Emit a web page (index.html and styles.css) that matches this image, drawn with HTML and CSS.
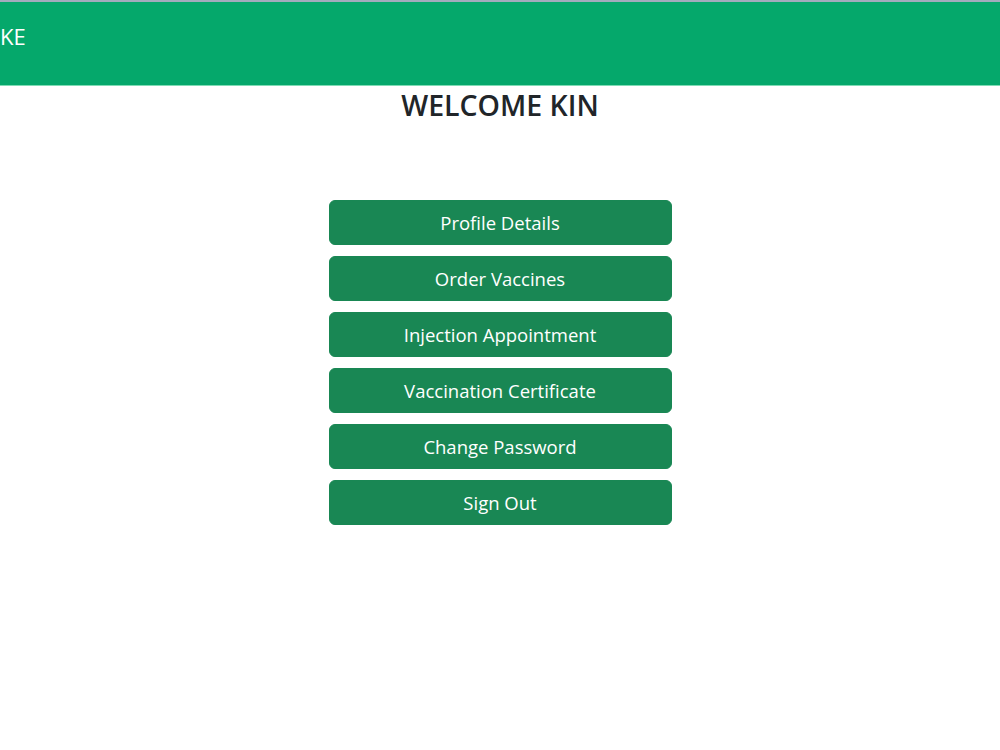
FILE: index.html
```html
<!DOCTYPE html>
<html lang="en">
<head>
  <meta charset="UTF-8" />
  <meta name="viewport" content="width=device-width, initial-scale=1.0" />
  <title>Welcome</title>
  <link rel="stylesheet" href="styles.css">
</head>
<body>
  <div class="navbar">
    <span class="brand">KE</span>
  </div>

  <h1 class="welcome">WELCOME KIN</h1>

  <div class="menu">
    <button class="menu-btn">Profile Details</button>
    <button class="menu-btn">Order Vaccines</button>
    <button class="menu-btn">Injection Appointment</button>
    <button class="menu-btn">Vaccination Certificate</button>
    <button class="menu-btn">Change Password</button>
    <button class="menu-btn">Sign Out</button>
  </div>
</body>
</html>
```

FILE: styles.css
```css
body {
  font-family: "Open Sans", "Noto Sans", sans-serif;
  margin: 0;
  background-color: #fff;
  color: #212529;
}
.navbar {
  height: 83px;
  background-color: #05a86b;
  border-top: 2px solid #a3abbd;
  border-bottom: 1px solid #7fdcb5;
  display: flex;
  align-items: center;
  overflow: hidden;
}
.brand {
  color: #fff;
  font-size: 22px;
  margin-left: 0;
  margin-top: -15px;
}
.welcome {
  text-align: center;
  font-size: 28.5px;
  font-weight: 600;
  margin: 1px 0 0;
  line-height: 36px;
}
.menu {
  width: 343px;
  margin: 77px auto 0;
  display: flex;
  flex-direction: column;
  gap: 11px;
}
.menu-btn {
  height: 45px;
  background-color: #198754;
  color: #fff;
  border: 1px solid #198754;
  border-radius: 6px;
  font-family: inherit;
  font-size: 18.5px;
  cursor: pointer;
}
.menu-btn:hover {
  background-color: #157347;
}
```
